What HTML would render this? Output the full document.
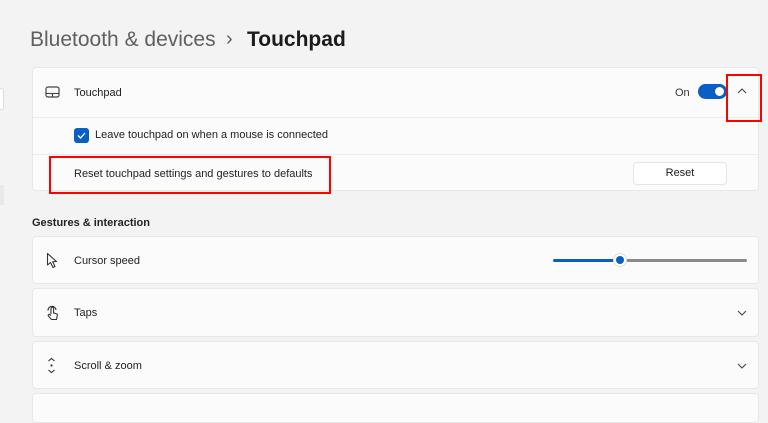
<!DOCTYPE html>
<html><head><style>
*{margin:0;padding:0;box-sizing:border-box}
body{width:768px;height:410px;overflow:hidden;background:#f3f3f3;font-family:"Liberation Sans",sans-serif;color:#1b1b1b;position:relative}
.a{position:absolute}
.card{position:absolute;left:32px;width:727px;background:#fbfbfb;border:1px solid #e8e8e8;border-radius:4px}
.t{position:absolute;font-size:11px;color:#222}
.red{position:absolute;border:2px solid #f00}
</style></head><body>
<div class="a" style="left:30px;top:28px;font-size:21px;color:#5f5f5f">Bluetooth &amp; devices</div>
<div class="a" style="left:226px;top:28px;font-size:20px;color:#5f5f5f">›</div>
<div class="a" style="left:247px;top:28px;font-size:21px;font-weight:bold;color:#1b1b1b">Touchpad</div>
<div class="a" style="left:0;top:88px;width:4px;height:22px;background:#fff;border:1px solid #ddd;border-left:none;border-radius:0 3px 3px 0"></div>
<div class="a" style="left:0;top:185px;width:4px;height:20px;background:#e9e9e9"></div>

<div class="card" style="top:67px;height:124px">
  <div class="a" style="left:0;top:49px;width:725px;height:1px;background:#ececec"></div>
  <div class="a" style="left:0;top:86px;width:725px;height:1px;background:#ececec"></div>
</div>
<svg class="a" style="left:45px;top:86px" width="15" height="13"><rect x="1" y="1" width="13" height="10" rx="2" fill="none" stroke="#444" stroke-width="1.2"/><line x1="1" y1="7.5" x2="14" y2="7.5" stroke="#444" stroke-width="1.1"/><line x1="7.5" y1="7.5" x2="7.5" y2="11" stroke="#444" stroke-width="1.1"/></svg>
<div class="t" style="left:74px;top:87px">Touchpad</div>
<div class="t" style="left:675px;top:87px;color:#333">On</div>
<div class="a" style="left:698px;top:84px;width:29px;height:15px;border-radius:8px;background:#0a5fc2"></div>
<div class="a" style="left:715px;top:87px;width:9px;height:9px;border-radius:50%;background:#fff"></div>
<svg class="a" style="left:737px;top:88px" width="10" height="6"><path d="M1 5L5 1L9 5" fill="none" stroke="#444" stroke-width="1.1"/></svg>
<div class="red" style="left:726px;top:74px;width:36px;height:48px"></div>

<div class="a" style="left:74px;top:128px;width:15px;height:15px;border-radius:3px;background:#0a5fc2"></div>
<svg class="a" style="left:74px;top:128px" width="15" height="15"><path d="M4 7.5L6.5 10L11 5" fill="none" stroke="#fff" stroke-width="1.3"/></svg>
<div class="t" style="left:95px;top:129px">Leave touchpad on when a mouse is connected</div>
<div class="t" style="left:74px;top:168px">Reset touchpad settings and gestures to defaults</div>
<div class="a" style="left:633px;top:162px;width:94px;height:23px;background:#fff;border:1px solid #e3e3e3;border-radius:4px;font-size:11px;text-align:center;line-height:21px">Reset</div>
<div class="red" style="left:49px;top:156px;width:282px;height:38px"></div>

<div class="a" style="left:32px;top:217px;font-size:11px;font-weight:bold;color:#222">Gestures &amp; interaction</div>

<div class="card" style="top:236px;height:48px"></div>
<svg class="a" style="left:46px;top:252px" width="13" height="17"><path d="M1.5 1.5L1.5 13L4.5 10.5L7 15.5L9 14.5L6.7 9.7L10.5 9.5Z" fill="none" stroke="#333" stroke-width="1.1" stroke-linejoin="round"/></svg>
<div class="t" style="left:74px;top:255px">Cursor speed</div>
<div class="a" style="left:553px;top:259px;width:67px;height:3px;background:#0a5fc2;border-radius:2px"></div>
<div class="a" style="left:620px;top:259px;width:127px;height:3px;background:#8a8a8a;border-radius:2px"></div>
<div class="a" style="left:613px;top:253px;width:14px;height:14px;border-radius:50%;background:#fff;border:1px solid #e0e0e0"></div>
<div class="a" style="left:616px;top:256px;width:8px;height:8px;border-radius:50%;background:#0a5fc2"></div>

<div class="card" style="top:288px;height:49px"></div>
<svg class="a" style="left:45px;top:305px" width="14" height="16"><path d="M6 9V3.5a1.3 1.3 0 0 1 2.6 0V8l2.6.6a1.5 1.5 0 0 1 1.1 1.8L11.5 14.5H6.5L3.5 11.2a1.1 1.1 0 0 1 1.6-1.5L6 10.6M3 5.5a4 4 0 0 1 8-0.5" fill="none" stroke="#333" stroke-width="1.1"/></svg>
<div class="t" style="left:74px;top:307px">Taps</div>
<svg class="a" style="left:737px;top:310px" width="10" height="6"><path d="M1 1L5 5L9 1" fill="none" stroke="#444" stroke-width="1.1"/></svg>

<div class="card" style="top:341px;height:48px"></div>
<svg class="a" style="left:47px;top:357px" width="9" height="17"><path d="M1.5 4L4.5 1.5L7.5 4M1.5 13L4.5 15.5L7.5 13" fill="none" stroke="#333" stroke-width="1.1"/><circle cx="4.5" cy="8.5" r="1.1" fill="#333"/></svg>
<div class="t" style="left:74px;top:360px">Scroll &amp; zoom</div>
<svg class="a" style="left:737px;top:363px" width="10" height="6"><path d="M1 1L5 5L9 1" fill="none" stroke="#444" stroke-width="1.1"/></svg>

<div class="card" style="top:393px;height:30px"></div>
</body></html>
